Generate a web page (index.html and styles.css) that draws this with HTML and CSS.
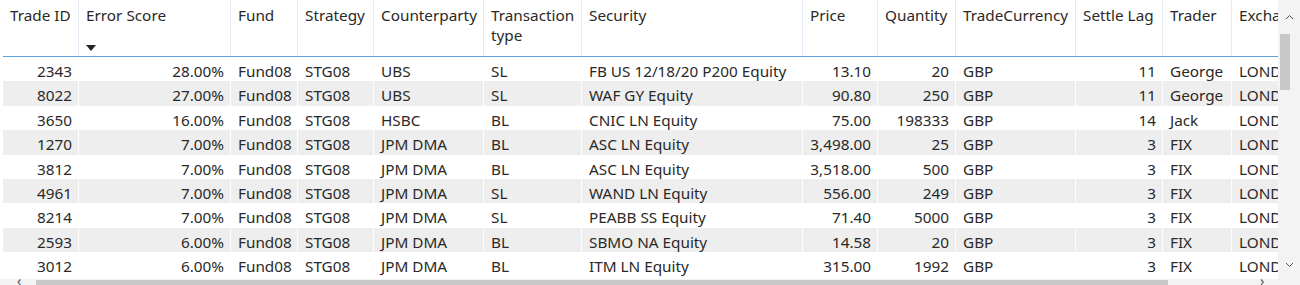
FILE: index.html
```html
<!DOCTYPE html>
<html>
<head>
<meta charset="utf-8">
<link rel="stylesheet" href="styles.css">
</head>
<body>
<div class="visual">
  <div class="viewport">
    <div class="table">
      <div class="row head">
        <div class="c">Trade ID</div>
        <div class="c sorted">Error Score<span class="sort"></span></div>
        <div class="c">Fund</div>
        <div class="c">Strategy</div>
        <div class="c">Counterparty</div>
        <div class="c">Transaction type</div>
        <div class="c">Security</div>
        <div class="c">Price</div>
        <div class="c">Quantity</div>
        <div class="c">TradeCurrency</div>
        <div class="c">Settle Lag</div>
        <div class="c">Trader</div>
        <div class="c">Exchange</div>
      </div>
      <div class="row"><div class="c r">2343</div><div class="c r">28.00%</div><div class="c">Fund08</div><div class="c">STG08</div><div class="c">UBS</div><div class="c">SL</div><div class="c">FB US 12/18/20 P200 Equity</div><div class="c r">13.10</div><div class="c r">20</div><div class="c">GBP</div><div class="c r">11</div><div class="c">George</div><div class="c">LONDON</div></div>
      <div class="row"><div class="c r">8022</div><div class="c r">27.00%</div><div class="c">Fund08</div><div class="c">STG08</div><div class="c">UBS</div><div class="c">SL</div><div class="c">WAF GY Equity</div><div class="c r">90.80</div><div class="c r">250</div><div class="c">GBP</div><div class="c r">11</div><div class="c">George</div><div class="c">LONDON</div></div>
      <div class="row"><div class="c r">3650</div><div class="c r">16.00%</div><div class="c">Fund08</div><div class="c">STG08</div><div class="c">HSBC</div><div class="c">BL</div><div class="c">CNIC LN Equity</div><div class="c r">75.00</div><div class="c r">198333</div><div class="c">GBP</div><div class="c r">14</div><div class="c">Jack</div><div class="c">LONDON</div></div>
      <div class="row"><div class="c r">1270</div><div class="c r">7.00%</div><div class="c">Fund08</div><div class="c">STG08</div><div class="c">JPM DMA</div><div class="c">BL</div><div class="c">ASC LN Equity</div><div class="c r">3,498.00</div><div class="c r">25</div><div class="c">GBP</div><div class="c r">3</div><div class="c">FIX</div><div class="c">LONDON</div></div>
      <div class="row"><div class="c r">3812</div><div class="c r">7.00%</div><div class="c">Fund08</div><div class="c">STG08</div><div class="c">JPM DMA</div><div class="c">BL</div><div class="c">ASC LN Equity</div><div class="c r">3,518.00</div><div class="c r">500</div><div class="c">GBP</div><div class="c r">3</div><div class="c">FIX</div><div class="c">LONDON</div></div>
      <div class="row"><div class="c r">4961</div><div class="c r">7.00%</div><div class="c">Fund08</div><div class="c">STG08</div><div class="c">JPM DMA</div><div class="c">SL</div><div class="c">WAND LN Equity</div><div class="c r">556.00</div><div class="c r">249</div><div class="c">GBP</div><div class="c r">3</div><div class="c">FIX</div><div class="c">LONDON</div></div>
      <div class="row"><div class="c r">8214</div><div class="c r">7.00%</div><div class="c">Fund08</div><div class="c">STG08</div><div class="c">JPM DMA</div><div class="c">SL</div><div class="c">PEABB SS Equity</div><div class="c r">71.40</div><div class="c r">5000</div><div class="c">GBP</div><div class="c r">3</div><div class="c">FIX</div><div class="c">LONDON</div></div>
      <div class="row"><div class="c r">2593</div><div class="c r">6.00%</div><div class="c">Fund08</div><div class="c">STG08</div><div class="c">JPM DMA</div><div class="c">BL</div><div class="c">SBMO NA Equity</div><div class="c r">14.58</div><div class="c r">20</div><div class="c">GBP</div><div class="c r">3</div><div class="c">FIX</div><div class="c">LONDON</div></div>
      <div class="row"><div class="c r">3012</div><div class="c r">6.00%</div><div class="c">Fund08</div><div class="c">STG08</div><div class="c">JPM DMA</div><div class="c">BL</div><div class="c">ITM LN Equity</div><div class="c r">315.00</div><div class="c r">1992</div><div class="c">GBP</div><div class="c r">3</div><div class="c">FIX</div><div class="c">LONDON</div></div>
    </div>
    <div class="hscroll">
      <span class="harrow left">&#8249;</span>
      <div class="hthumb"></div>
      <span class="harrow right">&#8250;</span>
    </div>
  </div>
  <div class="vscroll">
    <svg class="varrow" width="9" height="6" viewBox="0 0 9 6"><path d="M1 5 L4.5 1.5 L8 5" fill="none" stroke="#555" stroke-width="1"/></svg>
    <div class="vthumb"></div>
    <div class="vspace"></div>
    <svg class="varrow down" width="9" height="6" viewBox="0 0 9 6"><path d="M1 1 L4.5 4.5 L8 1" fill="none" stroke="#555" stroke-width="1"/></svg>
  </div>
</div>
</body>
</html>
```

FILE: styles.css
```css
html, body {
  margin: 0;
  padding: 0;
  background: #ffffff;
}

.visual {
  width: 1300px;
  height: 285px;
  display: flex;
  overflow: hidden;
  font-family: "Noto Sans", "Open Sans", sans-serif;
  font-size: 15.3px;
  color: #2a2928;
}

.viewport {
  position: relative;
  width: 1278px;
  height: 285px;
  overflow: hidden;
  padding-left: 3px;
  box-sizing: border-box;
}

.table {
  display: flex;
  flex-direction: column;
  width: 1345px;
}

.row {
  display: grid;
  grid-template-columns: 76px 152px 67px 76px 110px 98px 221px 75px 78px 120px 87px 69px 100px;
  height: 24.4px;
  line-height: 28.4px;
}

.row:nth-child(odd) {
  background: #eeeeee;
}

.row:nth-child(odd) .c {
  border-right: 1px solid #ffffff;
}

.row.head {
  height: 56px;
  line-height: 20px;
  background: #ffffff;
  border-bottom: 1.5px solid #5ea2dd;
  align-items: stretch;
}

.row.head .c {
  border-right: 1px solid #e3ecf6;
  white-space: normal;
  padding-top: 5px;
  position: relative;
}

.c {
  padding: 0 6px 0 7px;
  white-space: nowrap;
  overflow: hidden;
  box-sizing: border-box;
  border-right: 1px solid transparent;
}

.c.r {
  text-align: right;
}

.sort {
  position: absolute;
  left: 7px;
  top: 45px;
  width: 0;
  height: 0;
  border-left: 5px solid transparent;
  border-right: 5px solid transparent;
  border-top: 6px solid #252423;
}

.hscroll {
  position: absolute;
  left: 0;
  right: 0;
  top: 279px;
  height: 10px;
  background: #f3f3f3;
}

.hthumb {
  position: absolute;
  left: 36px;
  width: 1132px;
  top: 1px;
  height: 9px;
  background: #c8c8c8;
}

.harrow {
  position: absolute;
  top: -5px;
  font-size: 14px;
  color: #555;
  line-height: 14px;
}

.harrow.left { left: 17px; }
.harrow.right { left: 1260px; }

.vscroll {
  width: 22px;
  height: 285px;
  background: #f3f3f3;
  display: flex;
  flex-direction: column;
  align-items: flex-start;
  padding-left: 2px;
  box-sizing: border-box;
}

.varrow {
  margin: 14px 0 0 5px;
}

.varrow.down {
  margin: 0 0 17px 5px;
}

.vthumb {
  width: 10px;
  height: 56px;
  margin-top: 14px;
  background: #c8c8c8;
}

.vspace {
  flex: 1;
}
```
